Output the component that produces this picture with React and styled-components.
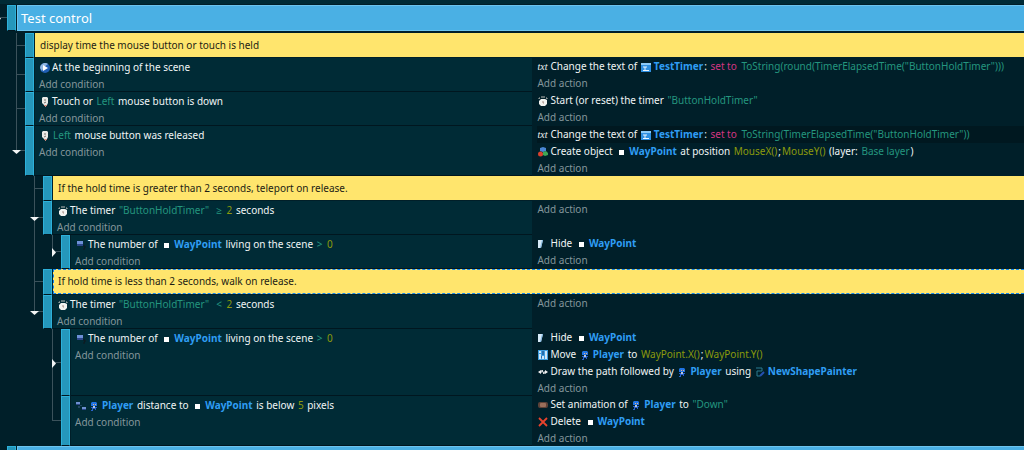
import React from 'react';
import styled, { createGlobalStyle } from 'styled-components';

const colors = {
  page: '#001f29',
  gap: '#00161f',
  condition: '#002b36',
  action: '#001f29',
  handle: '#2597bb',
  handleEdge: '#2db1da',
  group: '#4ab0e4',
  comment: '#ffe56d',
  text: '#f0f5f5',
  muted: '#84969b',
  object: '#2f9df4',
  string: '#24967f',
  number: '#8c9a0c',
  operator: '#d33682',
  line: '#3b525b',
};

const GlobalStyle = createGlobalStyle`
  * {
    box-sizing: border-box;
  }
  body {
    margin: 0;
    overflow: hidden;
    background: ${colors.page};
    font-family: 'Noto Sans', 'Open Sans', sans-serif;
    font-size: 10px;
    color: ${colors.text};
  }
`;

const Sheet = styled.main`
  width: 100%;
  height: 100vh;
  overflow: hidden;
  padding-top: 1px;
  border-top: 4px solid ${colors.condition};
`;

const Node = styled.section`
  display: grid;
  grid-template-columns: ${({ $root }) => ($root ? '7px' : '9px')} minmax(0, 1fr);
`;

const Gutter = styled.div`
  position: relative;
  display: grid;
  grid-template-rows: 1fr 1fr;
`;

const LineTop = styled.i`
  border-left: ${({ $root }) => ($root ? 0 : 1)}px solid ${colors.line};
  border-bottom: 1px solid ${colors.line};
`;

const LineRest = styled.i`
  border-left: ${({ $show }) => ($show ? 1 : 0)}px solid ${colors.line};
`;

const Toggle = styled.button`
  position: absolute;
  top: 50%;
  left: ${({ $root }) => ($root ? -7 : -4)}px;
  width: 9px;
  height: 9px;
  margin-top: -4px;
  padding: 0;
  border: 0;
  background: none;
  cursor: pointer;

  svg {
    display: block;
  }
`;

const Children = styled.div`
  padding-top: ${({ $root }) => ($root ? 2 : 0)}px;
  padding-left: 9px;
`;

const Row = styled.div`
  display: flex;
  min-width: 0;
`;

const Handle = styled.div`
  flex: 0 0 9px;
  margin-right: 1px;
  background: ${colors.handle};
  border: 1px solid ${colors.handleEdge};
  border-bottom-color: ${colors.gap};
`;

const GroupTitle = styled.h1`
  flex: 1;
  height: 26px;
  margin: 0;
  padding-left: 3px;
  border: 1px solid #6cc4ee;
  border-right: 0;
  background: ${colors.group};
  color: #fff;
  font-size: 13px;
  font-weight: 400;
  line-height: 24px;
`;

const Comment = styled.p`
  flex: 1;
  height: ${({ $selected }) => ($selected ? 25 : 24)}px;
  margin: 0 0 1px;
  padding-left: 4px;
  border: 1px ${({ $selected }) => ($selected ? 'dashed #1587f0' : `solid ${colors.comment}`)};
  border-right: 0;
  background: ${colors.comment};
  color: #1d1d14;
  line-height: 22px;
`;

const Conditions = styled.div`
  flex: 1;
  min-width: 0;
  padding: 1px 0 0 4px;
  background: ${colors.condition};
  box-shadow: inset 0 -1px ${colors.gap};
`;

const Actions = styled.div`
  flex: 0 0 48vw;
  min-width: 0;
  padding-left: 5px;
  background: ${colors.action};
`;

const Item = styled.div`
  display: flex;
  align-items: center;
  height: 17px;
  line-height: 17px;
  white-space: pre;
  background: ${({ $hover }) => ($hover ? '#001820' : 'transparent')};
`;

const AddLink = styled.a`
  display: block;
  height: 16px;
  line-height: 16px;
  color: ${colors.muted};
  text-decoration: none;
`;

const Token = styled.span`
  margin: 0 1px;
  color: ${({ $kind }) => colors[$kind]};
  font-weight: ${({ $kind }) => ($kind === 'object' ? 700 : 400)};
`;

const Svg = styled.svg`
  flex: none;
  margin: 0 2px 0 1px;
`;

const drawings = {
  play: (
    <>
      <circle cx="5" cy="5" r="5" fill="#1f5fb4" />
      <path d="M0 5a5 5 0 0 1 8-4L4 4 2 8z" fill="#8fb6e0" />
      <path d="M3 2l5 3-5 3z" fill="#fff" />
    </>
  ),
  mouse: (
    <>
      <path d="M3 0h4l1 1v5L7 8H4L2 6V1z" fill="#e9e9e6" />
      <path d="M5 2v2M4 6l2-1" stroke="#77706a" />
      <path d="M4 8h3v1H6v1H5V9H4z" fill="#c98a7c" />
    </>
  ),
  timer: (
    <>
      <path d="M2 4l1-1h4l2 1v4L7 10H3L1 8V5z" fill="#f3f2ef" />
      <path d="M1 3V2h1M3 1h4M8 2h1v1" stroke="#bdbdb8" fill="none" />
      <path d="M5 5v2h1" stroke="#a58d84" fill="none" />
    </>
  ),
  text: (
    <>
      <rect y="1" width="10" height="9" fill="#2e8fe0" />
      <path d="M0 1h10v2H0z" fill="#8bcaf8" />
      <path d="M2 5h4M4 5v3M2 8.500h6" stroke="#e9f5ff" />
    </>
  ),
  create: (
    <>
      <path d="M5 0l3 1v3L5 5 2 4V1z" fill="#4a86d4" />
      <circle cx="2.500" cy="7" r="2.500" fill="#d8412e" />
      <path d="M5 5l3-1 2 2v2L7 9 5 8z" fill="#3fa655" />
    </>
  ),
  square: <rect x="3" y="3" width="5" height="5" fill="#fff" />,
  count: (
    <>
      <rect x="1" y="1" width="6" height="5" fill="#6d8fd6" />
      <path d="M1 4h6v2H1z" fill="#2b4688" />
      <path d="M7 6h2v2H8v2" stroke="#10171d" fill="none" />
    </>
  ),
  distance: (
    <>
      <path d="M0 1h4v3H0zM6 6h4v3H6z" fill="#6d8fd0" />
      <path d="M0 3h4v1H0zM6 8h4v1H6z" fill="#2b4688" />
      <path d="M5 4v1M2 6h2" stroke="#44608c" />
    </>
  ),
  hide: (
    <>
      <path d="M0 1h5L3 9H0z" fill="#d6eaf8" />
      <path d="M5 1L3 9H2l2-8z" fill="#7fb4de" />
    </>
  ),
  move: (
    <>
      <rect width="10" height="10" fill="#3f9ee0" />
      <path d="M2 9V4M5 9V6M8 9V1M1 2h2" stroke="#fff" strokeWidth="1.500" />
      <path d="M5 1v4M3 7h1" stroke="#123c74" />
    </>
  ),
  draw: (
    <>
      <path d="M0 5l3-2v4zM10 5L7 3v4z" fill="#f2f2f2" />
      <path d="M2 5h2V3l2 4V5h2" stroke="#f2f2f2" fill="none" />
    </>
  ),
  player: (
    <>
      <path d="M3 1h4l1 1v3H2V2z" fill="#1f74e4" />
      <path d="M4 3h1v1H4zM6 3h1v1H6z" fill="#f0b07c" />
      <path d="M2 6h6v1H7v2H6V8H4v2H2V9h1V7H2z" fill="#2a62cc" />
      <path d="M4 5h2v2H4z" fill="#b9c7e2" />
    </>
  ),
  painter: (
    <>
      <path d="M1 1h6v3H2v5h3" stroke="#2a7d92" fill="none" />
      <path d="M5 9l4-4" stroke="#2450b0" strokeWidth="2" />
    </>
  ),
  animation: (
    <>
      <rect x="0" y="2" width="10" height="6" rx="2" fill="#5d4238" />
      <rect x="2" y="3" width="6" height="4" rx="1" fill="#9a6f5b" />
    </>
  ),
  remove: <path d="M1 1l8 8M9 1L1 9" stroke="#e8432c" strokeWidth="1.800" />,
};

const Icon = ({ name }) => (
  <Svg width="10" height="10" viewBox="0 0 10 10" aria-hidden="true">
    {drawings[name]}
  </Svg>
);

const TextMark = styled.em`
  flex: none;
  width: 13px;
  font-family: 'Liberation Serif', serif;
`;

const str = t => ({ kind: 'string', t });
const num = t => ({ kind: 'number', t });
const obj = (icon, t) => ({ kind: 'object', icon, t });

// Each line is [icon, ...parts]; a plain string is default text.
const way = obj('square', 'WayPoint');
const player = obj('player', 'Player');
const timerName = str('"ButtonHoldTimer"');
const setTo = { kind: 'operator', t: 'set to ' };
const countLine = ['count', 'The number of ', way, ' living on the scene ', str('> '), num('0')];

const tree = [
  { comment: 'display time the mouse button or touch is held' },
  {
    conditions: [['play', 'At the beginning of the scene']],
    actions: [
      [
        'txt',
        'Change the text of ',
        obj('text', 'TestTimer'),
        ': ',
        setTo,
        str('ToString(round(TimerElapsedTime("ButtonHoldTimer")))'),
      ],
    ],
  },
  {
    conditions: [['mouse', 'Touch or ', str('Left'), ' mouse button is down']],
    actions: [['timer', 'Start (or reset) the timer ', timerName]],
  },
  {
    open: true,
    conditions: [['mouse', str('Left'), ' mouse button was released']],
    actions: [
      [
        'txt',
        'Change the text of ',
        obj('text', 'TestTimer'),
        ': ',
        setTo,
        str('ToString(TimerElapsedTime("ButtonHoldTimer"))'),
      ],
      [
        'create',
        'Create object ',
        way,
        ' at position ',
        num('MouseX()'),
        ';',
        num('MouseY()'),
        ' (layer: ',
        str('Base layer'),
        ')',
      ],
    ],
    hover: true,
    children: [
      { comment: 'If the hold time is greater than 2 seconds, teleport on release.' },
      {
        open: true,
        conditions: [['timer', 'The timer ', timerName, str('  ≥ '), num('2'), ' seconds']],
        actions: [],
        children: [{ open: false, conditions: [countLine], actions: [['hide', 'Hide ', way]] }],
      },
      { comment: 'If hold time is less than 2 seconds, walk on release.', selected: true },
      {
        open: true,
        conditions: [['timer', 'The timer ', timerName, str('  < '), num('2'), ' seconds']],
        actions: [],
        children: [
          {
            open: false,
            conditions: [countLine],
            actions: [
              ['hide', 'Hide ', way],
              ['move', 'Move ', player, ' to ', num('WayPoint.X()'), ';', num('WayPoint.Y()')],
              [
                'draw',
                'Draw the path followed by ',
                player,
                ' using ',
                obj('painter', 'NewShapePainter'),
              ],
            ],
          },
          {
            conditions: [
              ['distance', player, ' distance to ', way, ' is below ', num('5'), ' pixels'],
            ],
            actions: [
              ['animation', 'Set animation of ', player, ' to ', str('"Down"')],
              ['remove', 'Delete ', way],
            ],
          },
        ],
      },
    ],
  },
];

const Line = ({ parts: [icon, ...parts], hover }) => (
  <Item $hover={hover}>
    {icon === 'txt' ? <TextMark>txt</TextMark> : <Icon name={icon} />}
    {parts.map((part, i) =>
      typeof part === 'string' ? (
        <span key={i}>{part}</span>
      ) : (
        <React.Fragment key={i}>
          {part.icon && <Icon name={part.icon} />}
          <Token $kind={part.kind}>{part.t}</Token>
        </React.Fragment>
      ),
    )}
  </Item>
);

const Arrow = ({ open, root }) => (
  <Toggle $root={root} aria-label={open ? 'Collapse' : 'Expand'}>
    <svg width="9" height="9" viewBox="0 0 9 9">
      <path d={open ? 'M0 3h9L4.500 7z' : 'M4 0v9l4-4.500z'} fill="#f2f5f5" />
    </svg>
  </Toggle>
);

const EventNode = ({ event, last }) => (
  <Node>
    <Gutter>
      <LineTop />
      <LineRest $show={!last} />
      {event.open !== undefined && <Arrow open={event.open} />}
    </Gutter>
    <Row>
      <Handle />
      {event.comment ? (
        <Comment $selected={event.selected}>{event.comment}</Comment>
      ) : (
        <>
          <Conditions>
            {event.conditions.map((parts, i) => (
              <Line key={i} parts={parts} />
            ))}
            <AddLink href="#condition">Add condition</AddLink>
          </Conditions>
          <Actions>
            {event.actions.map((parts, i) => (
              <Line key={i} parts={parts} hover={event.hover && i === 0} />
            ))}
            <AddLink href="#action">Add action</AddLink>
          </Actions>
        </>
      )}
    </Row>
    {event.children && (
      <>
        <LineRest $show={!last} />
        <Children>
          <EventList events={event.children} />
        </Children>
      </>
    )}
  </Node>
);

const EventList = ({ events }) =>
  events.map((event, i) => (
    <EventNode key={i} event={event} last={i === events.length - 1} />
  ));

const Group = ({ title, children }) => (
  <Node $root>
    <Gutter>
      <LineTop $root />
      <LineRest />
      <Arrow open={false} root />
    </Gutter>
    <Row>
      <Handle />
      <GroupTitle>{title}</GroupTitle>
    </Row>
    {children && (
      <>
        <LineRest />
        <Children $root>{children}</Children>
      </>
    )}
  </Node>
);

const App = () => (
  <>
    <GlobalStyle />
    <Sheet>
      <Group title="Test control">
        <EventList events={tree} />
      </Group>
      <Group title="" />
    </Sheet>
  </>
);

export default App;
